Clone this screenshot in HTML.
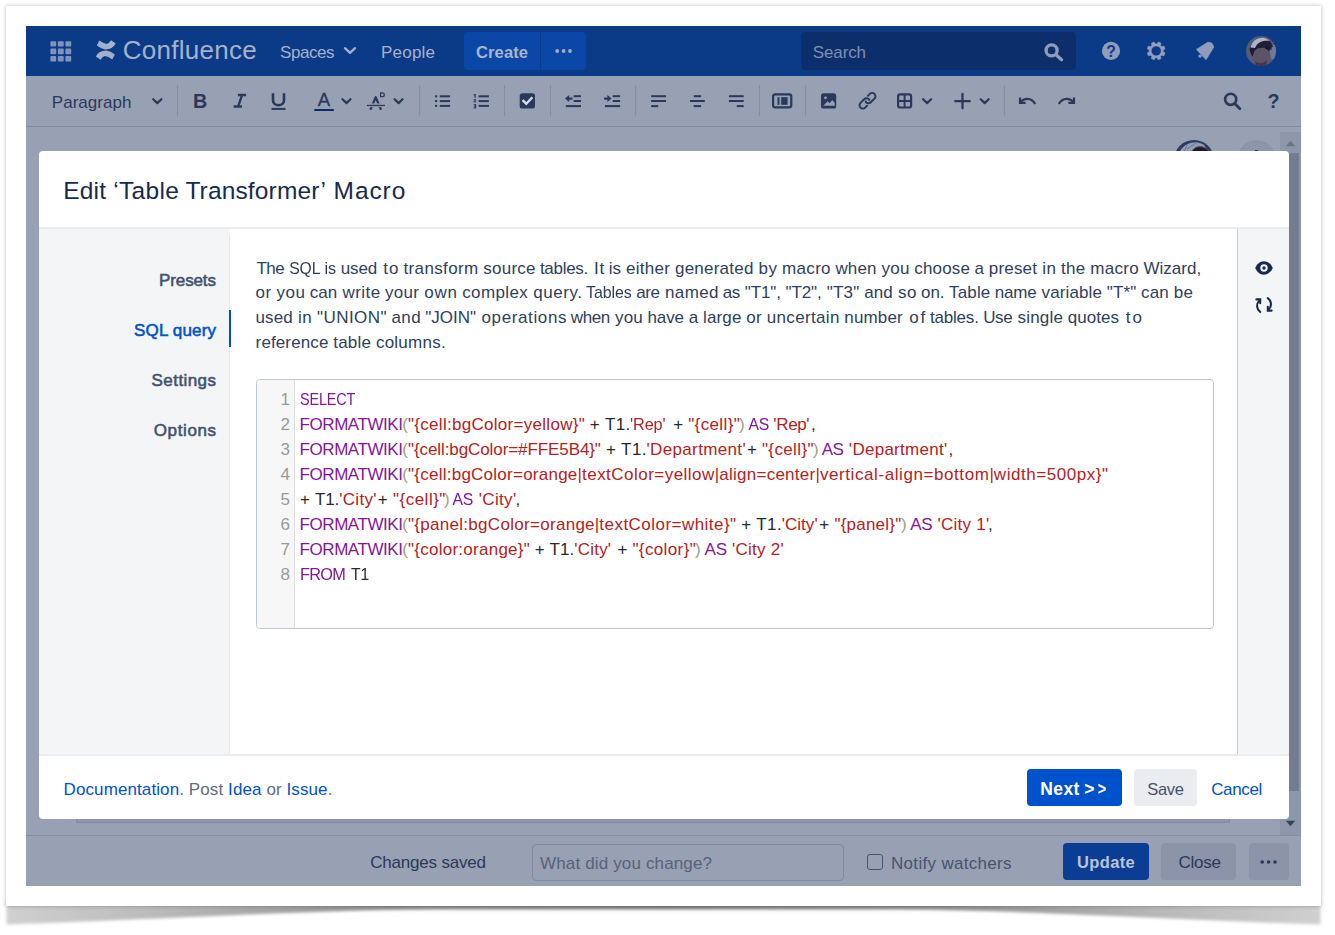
<!DOCTYPE html>
<html lang="en">
<head>
<meta charset="utf-8">
<title>Edit 'Table Transformer' Macro - Confluence</title>
<style>
html,body{margin:0;padding:0;}
body{width:1335px;height:935px;position:relative;overflow:hidden;background:#fff;font-family:"Liberation Sans",sans-serif;}
.a{position:absolute;}
.t{position:absolute;white-space:pre;margin:0;padding:0;}
#frame{left:6px;top:6px;width:1315px;height:900px;background:#fff;box-shadow:0 0 4px rgba(0,0,0,.28);}
#shot{left:26px;top:26px;width:1275px;height:860px;background:#98a1b3;}
#hdr{left:26px;top:26px;width:1275px;height:50px;background:#0b3b86;}
#tb{left:26px;top:76px;width:1275px;height:50px;background:#98a1b3;border-bottom:1px solid #838da2;}
.t span{display:inline-block;}
.sep{position:absolute;top:85px;width:1px;height:31px;background:#858fa4;}
#modal{left:39px;top:151px;width:1250px;height:668px;background:#fff;border-radius:4px;}
#mh{left:39px;top:227px;width:1250px;height:2px;background:#ebecf0;}
#nav{left:39px;top:229px;width:191px;height:525px;background:#f4f5f7;}
#navb{left:229px;top:235px;width:1px;height:519px;background:#e6e8ec;}
#navact{left:229px;top:310px;width:2px;height:37px;background:#0052cc;}
#rp{left:1237px;top:229px;width:52px;height:525px;background:#f4f5f7;border-left:1px solid #c9ccd3;box-sizing:border-box;}
#mf{left:39px;top:754px;width:1250px;height:2px;background:#ebecf0;}
#ed{left:256px;top:379px;width:958px;height:250px;box-sizing:border-box;border:1px solid #c1c7d0;border-radius:4px;background:#fff;overflow:hidden;}
#gut{left:0;top:0;width:37px;height:248px;background:#f7f7f7;border-right:1px solid #ddd;}
.btn{position:absolute;border-radius:4px;}
</style>
</head>
<body>
<svg class="a" style="left:0;top:895px" width="1335" height="40" viewBox="0 895 1335 40">
<defs>
<filter id="blr" x="-5%" y="-50%" width="110%" height="200%"><feGaussianBlur stdDeviation="1.5"/></filter>
<linearGradient id="shl" x1="0" x2="1" y1="0" y2="0"><stop offset="0" stop-color="#d0d0d0"/><stop offset="0.100" stop-color="#bdbdbd"/><stop offset="0.300" stop-color="#8c8c8c"/><stop offset="0.500" stop-color="#7e7e7e"/><stop offset="0.700" stop-color="#8c8c8c"/><stop offset="0.900" stop-color="#bdbdbd"/><stop offset="1" stop-color="#d0d0d0"/></linearGradient>
</defs>
<path d="M6.500 900L1320.500 900L1320.500 924.500C1150 918.500 1030 910.500 900 909.500L430 909.500C300 910.500 180 918.500 6.500 924.500Z" fill="url(#shl)" filter="url(#blr)"/>
</svg>
<div class="a" id="frame"></div>
<div class="a" id="shot"></div>
<div class="a" id="hdr"></div>
<div class="a" id="tb"></div>
<!-- header icons -->
<svg class="a" style="left:50px;top:41px" width="22" height="21" viewBox="0 0 22 21" fill="#8093bd">
<rect x="0.4" y="0.2" width="5.8" height="5.4" rx="0.8"/><rect x="7.9" y="0.2" width="5.8" height="5.4" rx="0.8"/><rect x="15.4" y="0.2" width="5.8" height="5.4" rx="0.8"/>
<rect x="0.4" y="7.6" width="5.8" height="5.6" rx="0.8"/><rect x="7.9" y="7.6" width="5.8" height="5.6" rx="0.8"/><rect x="15.4" y="7.6" width="5.8" height="5.6" rx="0.8"/>
<rect x="0.4" y="15.1" width="5.8" height="5.4" rx="0.8"/><rect x="7.9" y="15.1" width="5.8" height="5.4" rx="0.8"/><rect x="15.4" y="15.1" width="5.8" height="5.4" rx="0.8"/>
</svg>
<svg class="a" style="left:94px;top:38px" width="24" height="24" viewBox="94 38 24 24">
<defs><linearGradient id="lg1" x1="0" x2="1" y1="0" y2="0"><stop offset="0" stop-color="#9dabc9"/><stop offset="1" stop-color="#aab4cb"/></linearGradient></defs>
<path d="M99.300 40.600Q103.200 43.400 106.800 43.900Q109.400 43 111 40.300L115.700 43.600Q112.600 49.400 105.200 49.500Q100.600 48.700 96.800 45.600Z" fill="url(#lg1)"/>
<path transform="rotate(180 105.800 50)" d="M99.300 40.600Q103.200 43.400 106.800 43.900Q109.400 43 111 40.300L115.700 43.600Q112.600 49.400 105.200 49.500Q100.600 48.700 96.800 45.600Z" fill="url(#lg1)"/>
</svg>
<svg class="a" style="left:343px;top:46px" width="14" height="10" viewBox="0 0 14 10"><path d="M2 2.2 L7 6.8 L12 2.2" fill="none" stroke="#a4b0ca" stroke-width="2.4" stroke-linecap="round" stroke-linejoin="round"/></svg>
<div class="a" style="left:464px;top:32px;width:76px;height:38px;background:#0b47a6;border-radius:4px 0 0 4px"></div>
<div class="a" style="left:541px;top:32px;width:45px;height:38px;background:#0b47a6;border-radius:0 4px 4px 0"></div>
<svg class="a" style="left:554px;top:48px" width="20" height="6" viewBox="0 0 20 6" fill="#a3afc8"><circle cx="3.2" cy="3" r="1.9"/><circle cx="9.6" cy="3" r="1.9"/><circle cx="16" cy="3" r="1.9"/></svg>
<div class="a" style="left:801px;top:32px;width:275px;height:38px;background:#0c2f6c;border-radius:4px"></div>
<svg class="a" style="left:1043px;top:42px" width="22" height="21" viewBox="0 0 22 21"><circle cx="8.600" cy="8.400" r="5.500" fill="none" stroke="#8f9dbb" stroke-width="3.300"/><path d="M13 12.800L18.600 17.700" stroke="#8f9dbb" stroke-width="3.200" stroke-linecap="round"/></svg>
<svg class="a" style="left:1101px;top:41px" width="20" height="20" viewBox="0 0 20 20"><circle cx="10" cy="9.900" r="9.100" fill="#8f9dbb"/><text x="10.100" y="15.700" text-anchor="middle" font-family="Liberation Sans, sans-serif" font-weight="700" font-size="15.800" fill="#0b3b86">?</text></svg>
<svg class="a" style="left:1140px;top:36px" width="84" height="30" viewBox="1140 36 84 30">
<path fill-rule="evenodd" fill="#93a0bd" stroke="#93a0bd" stroke-width="0.600" stroke-linejoin="round" d="M1157.11 43.96L1158.25 42.03L1161.02 43.18L1160.46 45.35L1161.75 46.64L1163.92 46.08L1165.07 48.85L1163.14 49.99L1163.14 51.81L1165.07 52.95L1163.92 55.72L1161.75 55.16L1160.46 56.45L1161.02 58.62L1158.25 59.77L1157.11 57.84L1155.29 57.84L1154.15 59.77L1151.38 58.62L1151.94 56.45L1150.65 55.16L1148.48 55.72L1147.33 52.95L1149.26 51.81L1149.26 49.99L1147.33 48.85L1148.48 46.08L1150.65 46.64L1151.94 45.35L1151.38 43.18L1154.15 42.03L1155.29 43.96ZM1151.200 50.900a5 5 0 1 0 10 0a5 5 0 1 0 -10 0z"/>
<path d="M1196.300 49.400L1207.600 42.300Q1212.900 41.600 1213.700 47.200L1206.100 59.800Z" fill="#8f9dbb" stroke="#8f9dbb" stroke-width="0.600" stroke-linejoin="round"/>
<circle cx="1200" cy="56.100" r="1.700" fill="#8f9dbb"/>
</svg>
<svg class="a" style="left:1246px;top:36px" width="30" height="30" viewBox="0 0 30 30">
<defs><clipPath id="avc"><circle cx="15" cy="15" r="15"/></clipPath></defs>
<g clip-path="url(#avc)">
<rect width="30" height="30" fill="#565a72"/>
<path d="M23 9h8v14h-6z" fill="#6f7b98"/>
<ellipse cx="15" cy="20" rx="8.400" ry="10.500" fill="#5d5367"/>
<path d="M9 25c3 3 9 3 12-1l-1 7h-10z" fill="#3f374b"/>
<path d="M3.500 13C6 3 18 -1 24.500 6L27 10.500L25 12L22.800 14.400L18 11.700L11.600 12.200L8.500 15L6.500 21L4.500 17Z" fill="#201d35"/>
<path d="M4.500 11.500C6 3 17 -2 23.500 5C16.500 4 11.500 6.500 9 12Z" fill="#a9b4cc"/>
<circle cx="21" cy="12" r="0.700" fill="#000"/><circle cx="23" cy="14" r="0.700" fill="#000"/><circle cx="25" cy="13" r="0.700" fill="#000"/><circle cx="23" cy="11.800" r="0.600" fill="#000"/>
</g></svg>
<!-- toolbar separators -->
<div class="sep" style="left:177px"></div><div class="sep" style="left:419px"></div><div class="sep" style="left:504px"></div><div class="sep" style="left:550px"></div><div class="sep" style="left:635px"></div><div class="sep" style="left:759px"></div><div class="sep" style="left:805px"></div><div class="sep" style="left:1004px"></div>
<!-- toolbar icons -->
<svg class="a" style="left:26px;top:76px" width="1275" height="50" viewBox="26 76 1275 50" font-family="Liberation Sans, sans-serif">
<g fill="none" stroke="#2a395b" stroke-width="2.2" stroke-linecap="round" stroke-linejoin="round">
<path d="M153.200 99.200l4.100 3.900 4.100-3.900"/>
<path d="M342.500 99.200l4 3.900 4-3.900"/>
<path d="M394.600 99.200l4 3.900 4-3.900"/>
<path d="M923.100 99.200l4 3.900 4-3.900"/>
<path d="M980.700 99.200l4 3.900 4-3.900"/>
</g>
<text x="193.100" y="107.700" font-size="19.800" font-weight="700" fill="#2a395b">B</text>
<g fill="none" stroke="#2a395b" stroke-width="2.300" stroke-linecap="square"><path d="M239 95h6M234.800 106.500h6M242 95.300l-3.800 11"/></g>
<path d="M273 94.500v5.700a5.500 5 0 0 0 11 0v-5.700" fill="none" stroke="#2a395b" stroke-width="2.600" stroke-linecap="square"/>
<rect x="271.500" y="107.900" width="14" height="2" fill="#2a395b"/>
<text x="324" y="106" font-size="18.600" text-anchor="middle" fill="#2a395b" stroke="#2a395b" stroke-width="0.350">A</text>
<rect x="314.300" y="109" width="19.500" height="2" fill="#10296a"/>
<path d="M370.400 109.800L375.700 97.200L381 109.800" fill="none" stroke="#2a395b" stroke-width="2.200" stroke-linejoin="round"/>
<rect x="366" y="103.500" width="20" height="3.600" fill="#98a1b3"/>
<rect x="366.900" y="104.800" width="18" height="1.300" fill="#2a395b"/>
<path d="M380.600 92.800h1.800a1.900 1.900 0 0 1 0 3.800h-1.800z" fill="none" stroke="#2a395b" stroke-width="1.200"/>
<g fill="#2a395b">
<rect x="435" y="95.300" width="2.200" height="2"/><rect x="435" y="100.100" width="2.200" height="2"/><rect x="435" y="104.900" width="2.200" height="2"/>
<rect x="439.800" y="95.300" width="10.300" height="2"/><rect x="439.800" y="100.100" width="10.300" height="2"/><rect x="439.800" y="104.900" width="10.300" height="2"/>
<rect x="478.600" y="95.300" width="10.300" height="2"/><rect x="478.600" y="100.100" width="10.300" height="2"/><rect x="478.600" y="104.900" width="10.300" height="2"/>
<rect x="474.400" y="94.300" width="1.300" height="3.400"/><rect x="473.500" y="94.300" width="2" height="1"/>
<rect x="473.500" y="99.300" width="2.600" height="1"/><rect x="473.500" y="101.300" width="2.600" height="1"/><rect x="474.500" y="100.200" width="1.600" height="1"/>
<rect x="473.500" y="104.300" width="2.600" height="1"/><rect x="473.500" y="107.300" width="2.600" height="1"/><rect x="475" y="104.300" width="1.100" height="4"/><rect x="474" y="105.700" width="2" height="1"/>
<rect x="519.700" y="93.300" width="15.300" height="15.300" rx="2.600"/>
</g>
<path d="M523.400 100.900l2.900 2.900 5.300-5.700" fill="none" stroke="#d9dde6" stroke-width="2.300" stroke-linecap="square"/>
<g fill="#2a395b">
<rect x="573.600" y="95.200" width="7.400" height="2"/><rect x="573.600" y="100" width="7.400" height="2"/><rect x="565.800" y="105.100" width="15.200" height="2"/>
<path d="M565 98.600l4.200-3.500v2.400h3.300v2.200h-3.300v2.400z"/>
<rect x="612.700" y="95.200" width="7.400" height="2"/><rect x="612.700" y="100" width="7.400" height="2"/><rect x="604.900" y="105.100" width="15.200" height="2"/>
<path d="M611.600 98.600l-4.200-3.500v2.400h-3.300v2.200h3.300v2.400z"/>
<rect x="651.200" y="95.200" width="14.800" height="2"/><rect x="651.200" y="100" width="14.800" height="2"/><rect x="651.200" y="105.100" width="7" height="2"/>
<rect x="693.700" y="95.200" width="7.400" height="2"/><rect x="690" y="100" width="14.800" height="2"/><rect x="693.700" y="105.100" width="7.400" height="2"/>
<rect x="728.900" y="95.200" width="14.800" height="2"/><rect x="728.900" y="100" width="14.800" height="2"/><rect x="736.700" y="105.100" width="7" height="2"/>
</g>
<rect x="773.100" y="94.400" width="18.200" height="13" rx="2.200" fill="none" stroke="#2a395b" stroke-width="2.200"/>
<rect x="777.500" y="97.200" width="2" height="7.600" fill="#2a395b"/><rect x="781.200" y="97.200" width="6.400" height="7.600" fill="#2a395b"/>
<rect x="821" y="93.300" width="15.200" height="15.300" rx="2.600" fill="#2a395b"/>
<circle cx="825.500" cy="97.800" r="1.400" fill="#98a1b3"/><path d="M823.300 105.800l4.300-4.600 2 2 2.700-3.100 2.400 2.900v2.800z" fill="#98a1b3"/>
<g fill="none" stroke="#2a395b" stroke-width="2" stroke-linecap="round">
<path transform="translate(870.100 98.300) rotate(-45)" d="M0.300 -3.300L2.900 -3.300A3.300 3.300 0 0 1 2.900 3.300L-2.300 3.300A3.300 3.300 0 0 1 -5.500 -0.800"/>
<path transform="translate(864.900 103.200) rotate(135)" d="M0.300 -3.300L2.900 -3.300A3.300 3.300 0 0 1 2.900 3.300L-2.300 3.300A3.300 3.300 0 0 1 -5.500 -0.800"/>
</g>
<rect x="898.100" y="94.400" width="13" height="13.100" rx="2" fill="none" stroke="#2a395b" stroke-width="2.200"/>
<path d="M904.600 94.400v13.100M898.100 101h13" stroke="#2a395b" stroke-width="2" fill="none"/>
<path d="M955.200 101.100h14.600M962.500 93.900v14.400" stroke="#2a395b" stroke-width="2.300" stroke-linecap="round" fill="none"/>
<g fill="none" stroke="#2a395b" stroke-width="2.200" stroke-linejoin="miter">
<path d="M1020 97.400v5.400h5.600"/><path d="M1020.500 102.300c3.200-4.300 10.500-5.300 14.700 1.700"/>
<path d="M1074 97.400v5.400h-5.600"/><path d="M1073.500 102.300c-3.200-4.300-10.500-5.300-14.700 1.700"/>
</g>
<circle cx="1230.700" cy="99.300" r="5.600" fill="none" stroke="#2a395b" stroke-width="2.600"/>
<path d="M1234.900 103.700l5 5" stroke="#2a395b" stroke-width="2.800" stroke-linecap="round"/>
<text x="1273.600" y="108.300" font-size="19.600" font-weight="700" text-anchor="middle" fill="#2a395b">?</text>
</svg>
<!-- page behind dialog -->
<svg class="a" style="left:1174px;top:140px" width="40" height="40" viewBox="0 0 40 40">
<defs><clipPath id="avd"><circle cx="20" cy="20" r="20"/></clipPath></defs>
<g clip-path="url(#avd)"><rect width="40" height="40" fill="#2b3c5d"/>
<path d="M5 13C9 3 22 -1 30 5L34 11L14 13Z" fill="#8d9dba"/>
<path d="M18 11C22 5 30 5 36 12L38 20H16Z" fill="#1d1a2e"/>
<path d="M18 11C22 5 30 5 36 12" fill="none" stroke="#6a4a48" stroke-width="1"/>
<path d="M10 12L13 5M13 9L22 3" stroke="#5d6f92" stroke-width="0.800" fill="none"/>
</g></svg>
<div class="a" style="left:1236.500px;top:140px;width:39px;height:39px;border-radius:50%;background:#8c95aa"></div>
<div class="a" style="left:1255px;top:149.500px;width:2.500px;height:2px;background:#2a395b"></div>
<div class="a" style="left:76px;top:810px;width:1154px;height:13px;background:#8c95a9;border:1px solid #818ba0;box-sizing:border-box"></div>
<div class="a" style="left:26px;top:835px;width:1275px;height:1px;background:#858fa4"></div>
<!-- scrollbar -->
<div class="a" style="left:1280px;top:132px;width:21px;height:703px;background:#8e97aa"></div>
<div class="a" style="left:1289px;top:153px;width:10px;height:638px;background:#747d90"></div>
<svg class="a" style="left:1284px;top:139px" width="13" height="9" viewBox="0 0 13 9"><path d="M1.800 7.200L6.500 1.800l4.700 5.400z" fill="#6a7389"/></svg>
<svg class="a" style="left:1284px;top:819px" width="13" height="9" viewBox="0 0 13 9"><path d="M1.800 1.800L6.500 7.200l4.700-5.400z" fill="#3a4359"/></svg>
<!-- save bar -->
<div class="a" style="left:532px;top:844px;width:312px;height:37px;box-sizing:border-box;border:1px solid #7f899f;border-radius:4px;background:#98a1b3"></div>
<div class="a" style="left:867px;top:854px;width:16px;height:16px;box-sizing:border-box;border:1.500px solid #4a556c;border-radius:3px;background:#98a1b3"></div>
<div class="btn" style="left:1063px;top:843px;width:86px;height:36.500px;background:#0a3d93"></div>
<div class="btn" style="left:1161px;top:843px;width:75px;height:36.500px;background:#8b94a9"></div>
<div class="btn" style="left:1249px;top:843px;width:40px;height:36.500px;background:#8b94a9"></div>
<svg class="a" style="left:1259px;top:859px" width="20" height="6" viewBox="0 0 20 6" fill="#2a395b"><circle cx="3.200" cy="3" r="1.800"/><circle cx="9.600" cy="3" r="1.800"/><circle cx="16" cy="3" r="1.800"/></svg>
<!-- dialog -->
<div class="a" id="modal"></div>
<div class="a" id="mh"></div>
<div class="a" id="nav"></div>
<div class="a" id="navb"></div>
<div class="a" id="navact"></div>
<div class="a" id="rp"></div>
<div class="a" id="mf"></div>
<svg class="a" style="left:1254px;top:260px" width="20" height="16" viewBox="0 0 20 16"><path d="M10 1.300c4.300 0 7.300 3.100 8.800 6.700-1.500 3.600-4.500 6.700-8.800 6.700S2.700 11.600 1.200 8C2.700 4.400 5.700 1.300 10 1.300z" fill="#172b4d"/><circle cx="10" cy="8" r="3.700" fill="#f4f5f7"/><circle cx="10" cy="8" r="1.700" fill="#172b4d"/></svg>
<svg class="a" style="left:1254px;top:296px" width="20" height="18" viewBox="0 0 20 18" fill="none" stroke="#172b4d" stroke-width="2.100" stroke-linecap="round" stroke-linejoin="round"><path d="M6.200 15.800C2.400 13.200 2 8 5.200 4.600"/><path d="M2.400 3.400h3.800v3.800" stroke-linejoin="miter"/><path d="M13.800 2.200c3.800 2.600 4.200 7.800 1 11.200"/><path d="M17.600 14.600h-3.800v-3.800" stroke-linejoin="miter"/></svg>
<div class="a" id="ed"><div class="a" id="gut"></div></div>
<div class="btn" style="left:1027px;top:769px;width:95px;height:37px;background:#0052cc"></div>
<div class="btn" style="left:1134px;top:769px;width:63px;height:37px;background:#ebecf0"></div>
<!-- text -->
<div class="t" id="logo" style="left:122.80px;top:37.29px;font-size:26px;line-height:26px;color:#a6b2cb;letter-spacing:0.273px;">Confluence</div>
<div class="t" id="spaces" style="left:280.00px;top:44.41px;font-size:17px;line-height:17px;color:#a6b2cb;letter-spacing:-0.421px;">Spaces</div>
<div class="t" id="people" style="left:381.00px;top:44.41px;font-size:17px;line-height:17px;color:#a6b2cb;letter-spacing:0.213px;">People</div>
<div class="t" id="create" style="left:476.00px;top:43.83px;font-size:16.5px;line-height:16.5px;color:#a9b4cd;font-weight:700;letter-spacing:0.125px;">Create</div>
<div class="t" id="search" style="left:812.80px;top:43.61px;font-size:17px;line-height:17px;color:#7f8fb3;letter-spacing:-0.135px;">Search</div>
<div class="t" id="para" style="left:51.80px;top:94.41px;font-size:17px;line-height:17px;color:#2a395b;letter-spacing:0.026px;">Paragraph</div>
<div class="t" id="title" style="left:63.20px;top:179.06px;font-size:24.5px;line-height:24.5px;color:#172b4d;"><span style="letter-spacing:0.227px;margin-right:-0.227px;">Edit</span><span style="letter-spacing:0.329px;margin-right:-0.329px;"> ‘Table</span><span style="letter-spacing:0.148px;margin-right:-0.148px;"> Transformer’</span><span style="letter-spacing:0.902px;margin-right:-0.902px;"> Macro</span></div>
<div class="t" id="tab1" style="left:159.00px;top:271.81px;font-size:17px;line-height:17px;color:#42526e;letter-spacing:-0.107px;-webkit-text-stroke:0.55px;">Presets</div>
<div class="t" id="tab2" style="left:134.00px;top:321.61px;font-size:17px;line-height:17px;color:#0052cc;letter-spacing:0.170px;-webkit-text-stroke:0.55px;">SQL query</div>
<div class="t" id="tab3" style="left:151.60px;top:371.61px;font-size:17px;line-height:17px;color:#42526e;letter-spacing:0.423px;-webkit-text-stroke:0.55px;">Settings</div>
<div class="t" id="tab4" style="left:153.80px;top:422.31px;font-size:17px;line-height:17px;color:#42526e;letter-spacing:0.601px;-webkit-text-stroke:0.55px;">Options</div>
<div class="t" id="p1" style="left:256.60px;top:260.21px;font-size:17px;line-height:17px;color:#2f3f5d;"><span style="letter-spacing:-0.648px;margin-right:0.648px;">The</span><span style="letter-spacing:-0.140px;margin-right:-2.791px;transform:scaleX(0.923548);transform-origin:0 50%;"> SQL</span><span style="letter-spacing:-0.089px;margin-right:-0.732px;transform:scaleX(0.951176);transform-origin:0 50%;"> is</span><span style="letter-spacing:-0.073px;margin-right:0.073px;"> used</span><span style="letter-spacing:1.097px;margin-right:-1.097px;"> to</span><span style="letter-spacing:0.363px;margin-right:-0.363px;"> transform</span><span style="letter-spacing:0.258px;margin-right:-0.258px;"> source</span><span style="letter-spacing:-0.302px;margin-right:0.302px;"> tables.</span><span style="letter-spacing:0.964px;margin-right:-0.964px;"> It</span><span style="letter-spacing:-0.200px;margin-right:0.200px;"> is</span><span style="letter-spacing:0.308px;margin-right:-0.308px;"> either</span><span style="letter-spacing:0.223px;margin-right:-0.223px;"> generated</span><span style="letter-spacing:0.506px;margin-right:-0.506px;"> by</span><span style="letter-spacing:0.306px;margin-right:-0.306px;"> macro</span><span style="letter-spacing:0.131px;margin-right:-0.131px;"> when</span><span style="letter-spacing:0.253px;margin-right:-0.253px;"> you</span><span style="letter-spacing:0.176px;margin-right:-0.176px;"> choose</span><span style="letter-spacing:-0.188px;margin-right:0.188px;"> a</span><span style="letter-spacing:0.153px;margin-right:-0.153px;"> preset</span><span style="letter-spacing:0.566px;margin-right:-0.566px;"> in</span><span style="letter-spacing:0.314px;margin-right:-0.314px;"> the</span><span style="letter-spacing:0.306px;margin-right:-0.306px;"> macro</span><span style="letter-spacing:0.008px;margin-right:-0.008px;"> Wizard,</span></div>
<div class="t" id="p2" style="left:255.60px;top:284.11px;font-size:17px;line-height:17px;color:#2f3f5d;"><span style="letter-spacing:0.375px;margin-right:-0.375px;">or</span><span style="letter-spacing:0.586px;margin-right:-0.586px;"> you</span><span style="letter-spacing:0.053px;margin-right:-0.053px;"> can</span><span style="letter-spacing:0.435px;margin-right:-0.435px;"> write</span><span style="letter-spacing:0.226px;margin-right:-0.226px;"> your</span><span style="letter-spacing:0.759px;margin-right:-0.759px;"> own</span><span style="letter-spacing:0.396px;margin-right:-0.396px;"> complex</span><span style="letter-spacing:0.580px;margin-right:-0.580px;"> query.</span><span style="letter-spacing:-0.095px;margin-right:-3.098px;transform:scaleX(0.939755);transform-origin:0 50%;"> Tables</span><span style="letter-spacing:-0.399px;margin-right:0.399px;"> are</span><span style="letter-spacing:0.359px;margin-right:-0.359px;"> named</span><span style="letter-spacing:-0.494px;margin-right:0.494px;"> as</span><span style="letter-spacing:-0.132px;margin-right:0.132px;"> "T1",</span><span style="letter-spacing:-0.112px;margin-right:0.112px;"> "T2",</span><span style="letter-spacing:0.265px;margin-right:-0.265px;"> "T3"</span><span style="letter-spacing:0.102px;margin-right:-0.102px;"> and</span><span style="letter-spacing:0.506px;margin-right:-0.506px;"> so</span><span style="letter-spacing:-0.120px;margin-right:0.120px;"> on.</span><span style="letter-spacing:0.147px;margin-right:-0.148px;"> Table</span><span style="letter-spacing:-0.212px;margin-right:0.212px;"> name</span><span style="letter-spacing:0.117px;margin-right:-0.117px;"> variable</span><span style="letter-spacing:0.151px;margin-right:-0.151px;"> "T*"</span><span style="letter-spacing:0.053px;margin-right:-0.053px;"> can</span><span style="letter-spacing:0.380px;margin-right:-0.380px;"> be</span></div>
<div class="t" id="p3" style="left:255.60px;top:309.11px;font-size:17px;line-height:17px;color:#2f3f5d;"><span style="letter-spacing:0.075px;margin-right:-0.075px;">used</span><span style="letter-spacing:0.566px;margin-right:-0.566px;"> in</span><span style="letter-spacing:0.446px;margin-right:-0.446px;"> "UNION"</span><span style="letter-spacing:0.335px;margin-right:-0.335px;"> and</span><span style="letter-spacing:-0.003px;margin-right:0.003px;"> "JOIN"</span><span style="letter-spacing:0.628px;margin-right:-0.627px;"> operations</span><span style="letter-spacing:-0.419px;margin-right:0.419px;"> when</span><span style="letter-spacing:0.153px;margin-right:-0.153px;"> you</span><span style="letter-spacing:-0.098px;margin-right:0.098px;"> have</span><span style="letter-spacing:-0.087px;margin-right:0.087px;"> a</span><span style="letter-spacing:0.154px;margin-right:-0.154px;"> large</span><span style="letter-spacing:0.228px;margin-right:-0.228px;"> or</span><span style="letter-spacing:0.336px;margin-right:-0.336px;"> uncertain</span><span style="letter-spacing:0.154px;margin-right:-0.154px;"> number</span><span style="letter-spacing:1.847px;margin-right:-1.847px;"> of</span><span style="letter-spacing:-0.188px;margin-right:0.188px;"> tables.</span><span style="letter-spacing:-0.390px;margin-right:0.390px;"> Use</span><span style="letter-spacing:0.177px;margin-right:-0.177px;"> single</span><span style="letter-spacing:0.056px;margin-right:-0.056px;"> quotes</span><span style="letter-spacing:1.997px;margin-right:-1.997px;"> to</span></div>
<div class="t" id="p4" style="left:255.60px;top:334.01px;font-size:17px;line-height:17px;color:#2f3f5d;"><span style="letter-spacing:0.121px;margin-right:-0.121px;">reference</span><span style="letter-spacing:0.181px;margin-right:-0.181px;"> table</span><span style="letter-spacing:0.244px;margin-right:-0.244px;"> columns.</span></div>
<div class="t" id="ln1" style="left:280.50px;top:390.61px;font-size:17px;line-height:17px;color:#999999;">1</div>
<div class="t" id="ln2" style="left:280.50px;top:415.61px;font-size:17px;line-height:17px;color:#999999;">2</div>
<div class="t" id="ln3" style="left:280.50px;top:440.61px;font-size:17px;line-height:17px;color:#999999;">3</div>
<div class="t" id="ln4" style="left:280.50px;top:465.61px;font-size:17px;line-height:17px;color:#999999;">4</div>
<div class="t" id="ln5" style="left:280.50px;top:490.61px;font-size:17px;line-height:17px;color:#999999;">5</div>
<div class="t" id="ln6" style="left:280.50px;top:515.61px;font-size:17px;line-height:17px;color:#999999;">6</div>
<div class="t" id="ln7" style="left:280.50px;top:540.61px;font-size:17px;line-height:17px;color:#999999;">7</div>
<div class="t" id="ln8" style="left:280.50px;top:565.61px;font-size:17px;line-height:17px;color:#999999;">8</div>
<div class="t" id="c1" style="left:299.60px;top:390.61px;font-size:17px;line-height:17px;color:#000;"><span style="color:#85159a;letter-spacing:-0.156px;margin-right:-9.804px;transform:scaleX(0.847609);transform-origin:0 50%;">SELECT</span></div>
<div class="t" id="c2" style="left:299.60px;top:415.61px;font-size:17px;line-height:17px;color:#000;"><span style="color:#85159a;letter-spacing:-0.449px;margin-right:0.449px;">FORMATWIKI</span><span style="color:#a0a082;margin-left:-0.572px;">(</span><span style="color:#b32222;letter-spacing:0.288px;margin-right:-0.288px;">"{cell:bgColor=yellow}"</span><span style="color:#2a2a2a;letter-spacing:0.392px;margin-right:-0.392px;"> + T1.</span><span style="color:#b32222;letter-spacing:-0.099px;margin-right:-1.594px;transform:scaleX(0.95461);transform-origin:0 50%;">'Rep'</span><span style="color:#2a2a2a;letter-spacing:2.544px;margin-right:-2.544px;"> +</span><span style="color:#b32222;letter-spacing:0.368px;margin-right:-0.368px;"> "{cell}"</span><span style="color:#a0a082;margin-left:-0.672px;">)</span><span style="color:#85159a;letter-spacing:-0.143px;margin-right:-1.741px;transform:scaleX(0.928064);transform-origin:0 50%;"> AS</span><span style="color:#b32222;letter-spacing:-0.381px;margin-right:0.381px;"> 'Rep'</span><span style="color:#2a2a2a;margin-left:1.466px;">,</span></div>
<div class="t" id="c3" style="left:299.60px;top:440.61px;font-size:17px;line-height:17px;color:#000;"><span style="color:#85159a;letter-spacing:-0.449px;margin-right:0.449px;">FORMATWIKI</span><span style="color:#a0a082;margin-left:-0.572px;">(</span><span style="color:#b32222;letter-spacing:-0.089px;margin-right:0.089px;">"{cell:bgColor=#FFE5B4}"</span><span style="color:#2a2a2a;letter-spacing:0.392px;margin-right:-0.392px;"> + T1.</span><span style="color:#b32222;letter-spacing:0.353px;margin-right:-0.353px;">'Department'</span><span style="color:#2a2a2a;margin-left:1.263px;">+</span><span style="color:#b32222;letter-spacing:0.368px;margin-right:-0.368px;"> "{cell}"</span><span style="color:#a0a082;margin-left:-0.572px;">)</span><span style="color:#85159a;letter-spacing:-0.584px;margin-right:0.584px;"> AS</span><span style="color:#b32222;letter-spacing:0.271px;margin-right:-0.271px;"> 'Department'</span><span style="color:#2a2a2a;margin-left:1.366px;">,</span></div>
<div class="t" id="c4" style="left:299.60px;top:465.61px;font-size:17px;line-height:17px;color:#000;"><span style="color:#85159a;letter-spacing:-0.449px;margin-right:0.449px;">FORMATWIKI</span><span style="color:#a0a082;margin-left:-0.572px;">(</span><span style="color:#b32222;letter-spacing:0.249px;margin-right:-0.249px;">"{cell:bgColor=orange|</span><span style="color:#b32222;letter-spacing:0.474px;margin-right:-0.474px;">textColor=yellow|</span><span style="color:#b32222;letter-spacing:0.265px;margin-right:-0.265px;">align=center|</span><span style="color:#b32222;letter-spacing:0.579px;margin-right:-0.579px;">vertical-align=bottom|</span><span style="color:#b32222;letter-spacing:0.545px;margin-right:-0.545px;">width=500px}"</span></div>
<div class="t" id="c5" style="left:298.60px;top:490.61px;font-size:17px;line-height:17px;color:#000;"><span style="color:#2a2a2a;margin-right:0.663px;margin-left:1.500px;">+</span><span style="color:#2a2a2a;letter-spacing:-0.161px;margin-right:0.161px;"> T1.</span><span style="color:#b32222;letter-spacing:0.324px;margin-right:-0.324px;">'City'</span><span style="color:#2a2a2a;margin-left:1.163px;">+</span><span style="color:#b32222;letter-spacing:0.505px;margin-right:-0.505px;"> "{cell}"</span><span style="color:#a0a082;margin-right:-0.172px;margin-left:-1.500px;">)</span><span style="color:#85159a;letter-spacing:-0.143px;margin-right:-1.741px;transform:scaleX(0.928064);transform-origin:0 50%;"> AS</span><span style="color:#b32222;letter-spacing:0.333px;margin-right:-0.333px;"> 'City'</span><span style="color:#2a2a2a;margin-left:-0.734px;">,</span></div>
<div class="t" id="c6" style="left:299.60px;top:515.61px;font-size:17px;line-height:17px;color:#000;"><span style="color:#85159a;letter-spacing:-0.449px;margin-right:0.449px;">FORMATWIKI</span><span style="color:#a0a082;margin-left:-0.572px;">(</span><span style="color:#b32222;letter-spacing:0.293px;margin-right:-0.293px;">"{panel:bgColor=orange|</span><span style="color:#b32222;letter-spacing:0.465px;margin-right:-0.465px;">textColor=white}"</span><span style="color:#2a2a2a;letter-spacing:0.372px;margin-right:-0.372px;"> + T1.</span><span style="color:#b32222;letter-spacing:0.044px;margin-right:-0.044px;">'City'</span><span style="color:#2a2a2a;margin-right:0.363px;margin-left:1.500px;">+</span><span style="color:#b32222;letter-spacing:0.228px;margin-right:-0.228px;"> "{panel}"</span><span style="color:#a0a082;margin-left:-0.272px;">)</span><span style="color:#85159a;letter-spacing:-0.284px;margin-right:0.284px;"> AS</span><span style="color:#b32222;letter-spacing:0.241px;margin-right:-0.241px;"> 'City 1'</span><span style="color:#2a2a2a;margin-left:-1.134px;">,</span></div>
<div class="t" id="c7" style="left:299.60px;top:540.61px;font-size:17px;line-height:17px;color:#000;"><span style="color:#85159a;letter-spacing:-0.449px;margin-right:0.449px;">FORMATWIKI</span><span style="color:#a0a082;margin-left:-0.572px;">(</span><span style="color:#b32222;letter-spacing:0.258px;margin-right:-0.258px;">"{color:orange}"</span><span style="color:#2a2a2a;letter-spacing:0.172px;margin-right:-0.172px;"> + T1.</span><span style="color:#b32222;letter-spacing:0.204px;margin-right:-0.204px;">'City'</span><span style="color:#2a2a2a;letter-spacing:1.544px;margin-right:-1.544px;"> +</span><span style="color:#b32222;letter-spacing:0.378px;margin-right:-0.378px;"> "{color}"</span><span style="color:#a0a082;margin-left:-0.672px;">)</span><span style="color:#85159a;letter-spacing:-0.084px;margin-right:0.084px;"> AS</span><span style="color:#b32222;letter-spacing:0.254px;margin-right:-0.254px;"> 'City 2'</span></div>
<div class="t" id="c8" style="left:299.60px;top:565.61px;font-size:17px;line-height:17px;color:#000;"><span style="color:#85159a;letter-spacing:-0.782px;margin-right:0.782px;transform:scaleX(0.95911);transform-origin:0 50%;">FROM</span><span style="color:#2a2a2a;letter-spacing:-0.131px;margin-right:-1.672px;transform:scaleX(0.924874);transform-origin:0 50%;"> T1</span></div>
<div class="t" id="f1" style="left:63.60px;top:781.11px;font-size:17px;line-height:17px;color:#5e6c84;letter-spacing:0.098px;"><span style="color:#0052cc;">Documentation</span><span style="color:#5e6c84;">. Post </span><span style="color:#0052cc;">Idea</span><span style="color:#5e6c84;"> or </span><span style="color:#0052cc;">Issue</span><span style="color:#5e6c84;">.</span></div>
<div class="t" id="next" style="left:1040.20px;top:780.99px;font-size:17.5px;line-height:17.5px;color:#ffffff;font-weight:700;"><span style="letter-spacing:0.421px;margin-right:-0.421px;">Next</span><span style="letter-spacing:-0.094px;margin-right:0.094px;"> &gt;</span><span style="letter-spacing:-0.332px;margin-right:-2.030px;transform:scaleX(0.84);transform-origin:0 50%;"> &gt;</span></div>
<div class="t" id="save" style="left:1147.20px;top:781.03px;font-size:16.5px;line-height:16.5px;color:#42526e;letter-spacing:-0.270px;">Save</div>
<div class="t" id="cancel" style="left:1211.20px;top:781.41px;font-size:17px;line-height:17px;color:#0052cc;letter-spacing:-0.344px;">Cancel</div>
<div class="t" id="chg" style="left:370.20px;top:854.01px;font-size:17px;line-height:17px;color:#2a395b;letter-spacing:-0.195px;">Changes saved</div>
<div class="t" id="what" style="left:540.00px;top:855.21px;font-size:17px;line-height:17px;color:#56627c;letter-spacing:0.149px;">What did you change?</div>
<div class="t" id="notify" style="left:891.00px;top:854.61px;font-size:17px;line-height:17px;color:#465370;letter-spacing:0.314px;">Notify watchers</div>
<div class="t" id="update" style="left:1077.00px;top:854.43px;font-size:16.5px;line-height:16.5px;color:#b9c3d9;font-weight:700;letter-spacing:0.376px;">Update</div>
<div class="t" id="close" style="left:1178.40px;top:854.01px;font-size:17px;line-height:17px;color:#2a395b;letter-spacing:-0.217px;">Close</div>
</body>
</html>
